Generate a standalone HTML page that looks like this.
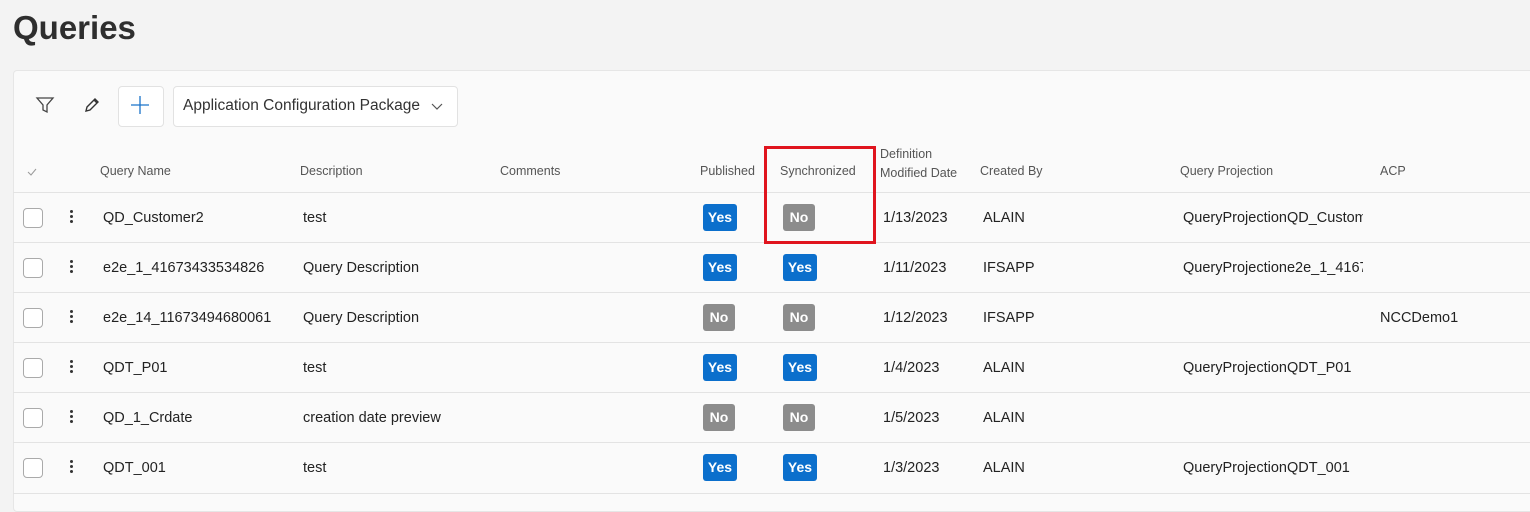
<!DOCTYPE html>
<html><head><style>
body{margin:0;width:1530px;height:501px;background:#f3f3f3;font-family:"Liberation Sans",sans-serif;overflow:hidden;position:relative;color:#222}
h1{position:absolute;left:13px;top:9px;margin:0;font-size:33px;font-weight:bold;color:#2e2e2e}
.card{position:absolute;left:13px;top:70px;width:1530px;height:440px;background:#fafafa;border:1px solid #e6e6e6;border-radius:4px}
.abs{position:absolute}
.btn{position:absolute;background:#fff;border:1px solid #e2e2e2;border-radius:4px}
.hd{position:absolute;font-size:12.5px;color:#555}
.row{position:absolute;left:13px;width:1520px;height:50px;border-top:1px solid #e3e3e3}
.c{position:absolute;font-size:14.5px;color:#222;top:17px}
.cb{position:absolute;left:10px;top:15px;width:18px;height:18px;border:1px solid #aaa;border-radius:4px;background:#fff}
.dots{position:absolute;left:57px;top:17px;width:3px}
.dots i{display:block;width:3px;height:3px;background:#333;border-radius:50%;margin-bottom:2px}
.b{position:absolute;top:11px;height:27px;border-radius:3px;color:#fff;font-weight:bold;font-size:14px;line-height:27px;text-align:center}
.y{background:#0b6fcc;width:34px}.n{background:#8c8c8c;width:32px}
</style></head><body>
<h1>Queries</h1>
<div class="card"></div>
<svg class="abs" style="left:35px;top:95px" width="20" height="20" viewBox="0 0 20 20"><path d="M2 3h16l-6 7v7l-4-2v-5z" fill="none" stroke="#444" stroke-width="1.3"/></svg>
<svg class="abs" style="left:83px;top:96px" width="18" height="18" viewBox="0 0 18 18"><path d="M3 15l1-4 8-8 3 3-8 8z M11 4l3 3" fill="none" stroke="#333" stroke-width="1.4"/></svg>
<div class="btn" style="left:118px;top:86px;width:44px;height:39px"></div>
<svg class="abs" style="left:131px;top:96px" width="18" height="18"><path d="M9 0v18M0 9h18" stroke="#1a73c9" stroke-width="1.3"/></svg>
<div class="btn" style="left:173px;top:86px;width:283px;height:39px"></div>
<div class="abs" style="left:183px;top:97px;font-size:15.5px;color:#333">Application Configuration Package</div>
<svg class="abs" style="left:431px;top:103px" width="12" height="8"><path d="M1 1l5 5 5-5" fill="none" stroke="#555" stroke-width="1.2"/></svg>
<svg class="abs" style="left:27px;top:168px" width="10" height="8"><path d="M1 4l3 3 5-6" fill="none" stroke="#999" stroke-width="1"/></svg>
<div class="hd" style="left:100px;top:164px">Query Name</div>
<div class="hd" style="left:300px;top:164px">Description</div>
<div class="hd" style="left:500px;top:164px">Comments</div>
<div class="hd" style="left:700px;top:164px">Published</div>
<div class="hd" style="left:780px;top:164px">Synchronized</div>
<div class="hd" style="left:880px;top:145px;line-height:19px">Definition<br>Modified Date</div>
<div class="hd" style="left:980px;top:164px">Created By</div>
<div class="hd" style="left:1180px;top:164px">Query Projection</div>
<div class="hd" style="left:1380px;top:164px">ACP</div>

<div class="row" style="top:192px"><div class="cb"></div><div class="dots"><i></i><i></i><i></i></div><div class="c" style="left:90px">QD_Customer2</div><div class="c" style="left:290px">test</div><div class="b y" style="left:690px">Yes</div><div class="b n" style="left:770px">No</div><div class="c" style="left:870px">1/13/2023</div><div class="c" style="left:970px">ALAIN</div><div class="c" style="left:1170px;width:180px;overflow:hidden;white-space:nowrap">QueryProjectionQD_Customer2</div></div>
<div class="row" style="top:242px"><div class="cb"></div><div class="dots"><i></i><i></i><i></i></div><div class="c" style="left:90px">e2e_1_41673433534826</div><div class="c" style="left:290px">Query Description</div><div class="b y" style="left:690px">Yes</div><div class="b y" style="left:770px">Yes</div><div class="c" style="left:870px">1/11/2023</div><div class="c" style="left:970px">IFSAPP</div><div class="c" style="left:1170px;width:180px;overflow:hidden;white-space:nowrap">QueryProjectione2e_1_41673</div></div>
<div class="row" style="top:292px"><div class="cb"></div><div class="dots"><i></i><i></i><i></i></div><div class="c" style="left:90px">e2e_14_11673494680061</div><div class="c" style="left:290px">Query Description</div><div class="b n" style="left:690px">No</div><div class="b n" style="left:770px">No</div><div class="c" style="left:870px">1/12/2023</div><div class="c" style="left:970px">IFSAPP</div><div class="c" style="left:1367px">NCCDemo1</div></div>
<div class="row" style="top:342px"><div class="cb"></div><div class="dots"><i></i><i></i><i></i></div><div class="c" style="left:90px">QDT_P01</div><div class="c" style="left:290px">test</div><div class="b y" style="left:690px">Yes</div><div class="b y" style="left:770px">Yes</div><div class="c" style="left:870px">1/4/2023</div><div class="c" style="left:970px">ALAIN</div><div class="c" style="left:1170px">QueryProjectionQDT_P01</div></div>
<div class="row" style="top:392px"><div class="cb"></div><div class="dots"><i></i><i></i><i></i></div><div class="c" style="left:90px">QD_1_Crdate</div><div class="c" style="left:290px">creation date preview</div><div class="b n" style="left:690px">No</div><div class="b n" style="left:770px">No</div><div class="c" style="left:870px">1/5/2023</div><div class="c" style="left:970px">ALAIN</div></div>
<div class="row" style="top:442px;border-bottom:1px solid #e3e3e3"><div class="cb"></div><div class="dots"><i></i><i></i><i></i></div><div class="c" style="left:90px">QDT_001</div><div class="c" style="left:290px">test</div><div class="b y" style="left:690px">Yes</div><div class="b y" style="left:770px">Yes</div><div class="c" style="left:870px">1/3/2023</div><div class="c" style="left:970px">ALAIN</div><div class="c" style="left:1170px">QueryProjectionQDT_001</div></div>

<div class="abs" style="left:764px;top:146px;width:106px;height:92px;border:3px solid #e0141e"></div>
</body></html>
